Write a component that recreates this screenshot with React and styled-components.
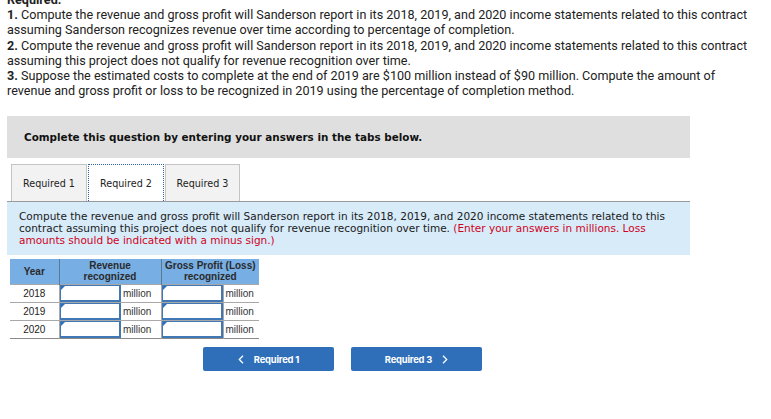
import React from 'react';
import styled, { createGlobalStyle } from 'styled-components';

const GlobalStyle = createGlobalStyle`
  html, body {
    margin: 0;
    padding: 0;
    background: #ffffff;
  }
  body {
    width: 771px;
    height: 419px;
    overflow: hidden;
  }
`

const Page = styled.div`
  padding: 0 7px;
  color: #222;
`

const Intro = styled.div`
  font-family: Roboto, "Liberation Sans", sans-serif;
  font-size: 12.6px;
  line-height: 15.2px;
  margin-top: -8px;
  width: 760px;
  white-space: nowrap;
`

const Line = styled.div``

const Num = styled.b`
  font-weight: 700;
`

const Notice = styled.div`
  width: 683px;
  height: 42px;
  margin-top: 18px;
  background: #dfdfdf;
  box-sizing: border-box;
  padding: 0 17px;
  display: flex;
  align-items: center;
  font-family: "DejaVu Sans", Verdana, sans-serif;
  font-weight: 700;
  font-size: 10.4px;
  color: #111;
`

const Tabs = styled.div`
  width: 683px;
  margin-top: 6px;
  padding-left: 4px;
  box-sizing: border-box;
  display: flex;
  border-bottom: 1px solid #9a9a9a;
`

const Tab = styled.div`
  width: ${(p) => p.w}px;
  height: 37px;
  box-sizing: border-box;
  display: flex;
  align-items: center;
  justify-content: center;
  font-family: "DejaVu Sans", Verdana, sans-serif;
  font-size: 9.6px;
  color: #222;
  background: ${(p) => (p.active ? '#ffffff' : '#f2f2f2')};
  border: ${(p) => (p.active ? '1px dotted #2b5fa8' : '1px solid #c4c4c4')};
  border-bottom: none;
  margin-right: 1px;
`

const Panel = styled.div`
  width: 683px;
  height: 53px;
  background: #d7ebf9;
  box-sizing: border-box;
  padding: 8px 12px 0;
  font-family: "DejaVu Sans", Verdana, sans-serif;
  font-size: 10.5px;
  line-height: 12px;
  color: #1a1a1a;
  white-space: nowrap;
`

const Red = styled.span`
  color: #d0021b;
`

const Table = styled.table`
  margin: 4px 0 0 3px;
  border-collapse: collapse;
  table-layout: fixed;
  width: 249px;
  font-family: "Liberation Sans", Arial, sans-serif;
  font-size: 10px;
  color: #222;
  border-bottom: 1px solid #8a8a8a;
`

const Th = styled.th`
  background: #77aee4;
  height: 25px;
  padding: 0;
  font-weight: 700;
  font-size: 10px;
  line-height: 10.5px;
  color: #2a2a2a;
  white-space: nowrap;
  border-left: ${(p) => (p.first ? 'none' : '1px solid #5b7895')};
`

const Td = styled.td`
  height: 17px;
  padding: 0;
  border-top: 1px solid #a8a8a8;
  text-align: ${(p) => (p.left ? 'left' : 'center')};
  border-left: ${(p) => (p.line ? '1px solid #a8a8a8' : 'none')};
`

const InputCell = styled.td`
  padding: 0;
  height: 17px;
  border-top: 1px solid #a8a8a8;
  border-left: 1px solid #a8a8a8;
  position: relative;
`

const Field = styled.div`
  height: 17px;
  box-sizing: border-box;
  border: 2px solid #3f78b5;
  border-top-width: 1px;
  border-left-width: 1px;
  background: #fff;
`

const Marker = styled.span`
  position: absolute;
  left: 1px;
  top: 1px;
  width: 0;
  height: 0;
  border-top: 4px solid #2f6fbd;
  border-right: 4px solid transparent;
`

const Unit = styled.span`
  display: block;
  padding-left: 2px;
  color: #333;
`

const Nav = styled.div`
  width: 683px;
  margin-top: 8px;
  padding-right: 12px;
  box-sizing: border-box;
  display: flex;
  justify-content: center;
  gap: 17px;
`

const NavButton = styled.div`
  width: 131px;
  height: 24px;
  background: #2f6fba;
  border-radius: 2px;
  color: #fff;
  display: flex;
  align-items: center;
  justify-content: center;
  gap: 10px;
  font-family: Inter, "Liberation Sans", sans-serif;
  font-weight: 700;
  font-size: 9.4px;
  letter-spacing: -0.2px;
`

const Chevron = ({ dir }) => (
  <svg width="6" height="9" viewBox="0 0 6 9">
    <path
      d={dir === 'left' ? 'M5 0.8 L1.3 4.5 L5 8.2' : 'M1 0.8 L4.7 4.5 L1 8.2'}
      fill="none"
      stroke="#fff"
      strokeWidth="1.3"
    />
  </svg>
)

const rows = ['2018', '2019', '2020'];

const App = () => {
  return (
    <>
      <GlobalStyle />
      <Page>
        <Intro>
          <Line><Num>Required:</Num></Line>
          <Line><Num>1.</Num> Compute the revenue and gross profit will Sanderson report in its 2018, 2019, and 2020 income statements related to this contract</Line>
          <Line>assuming Sanderson recognizes revenue over time according to percentage of completion.</Line>
          <Line><Num>2.</Num> Compute the revenue and gross profit will Sanderson report in its 2018, 2019, and 2020 income statements related to this contract</Line>
          <Line>assuming this project does not qualify for revenue recognition over time.</Line>
          <Line><Num>3.</Num> Suppose the estimated costs to complete at the end of 2019 are $100 million instead of $90 million. Compute the amount of</Line>
          <Line>revenue and gross profit or loss to be recognized in 2019 using the percentage of completion method.</Line>
        </Intro>

        <Notice>Complete this question by entering your answers in the tabs below.</Notice>

        <Tabs>
          <Tab w={76}>Required 1</Tab>
          <Tab w={76} active>Required 2</Tab>
          <Tab w={75}>Required 3</Tab>
        </Tabs>

        <Panel>
          Compute the revenue and gross profit will Sanderson report in its 2018, 2019, and 2020 income statements related to this
          <br />
          contract assuming this project does not qualify for revenue recognition over time. <Red>(Enter your answers in millions. Loss</Red>
          <br />
          <Red>amounts should be indicated with a minus sign.)</Red>
        </Panel>

        <Table>
          <colgroup>
            <col style={{ width: 49 }} />
            <col style={{ width: 62 }} />
            <col style={{ width: 40 }} />
            <col style={{ width: 62 }} />
            <col style={{ width: 36 }} />
          </colgroup>
          <thead>
            <tr>
              <Th first>Year</Th>
              <Th colSpan={2}>Revenue<br />recognized</Th>
              <Th colSpan={2}>Gross Profit (Loss)<br />recognized</Th>
            </tr>
          </thead>
          <tbody>
            {rows.map((year) => (
              <tr key={year}>
                <Td>{year}</Td>
                <InputCell>
                  <Field />
                  <Marker />
                </InputCell>
                <Td left><Unit>million</Unit></Td>
                <InputCell>
                  <Field />
                  <Marker />
                </InputCell>
                <Td left line><Unit>million</Unit></Td>
              </tr>
            ))}
          </tbody>
        </Table>

        <Nav>
          <NavButton>
            <Chevron dir="left" />
            Required 1
          </NavButton>
          <NavButton>
            Required 3
            <Chevron dir="right" />
          </NavButton>
        </Nav>
      </Page>
    </>
  );
};

export default App;
